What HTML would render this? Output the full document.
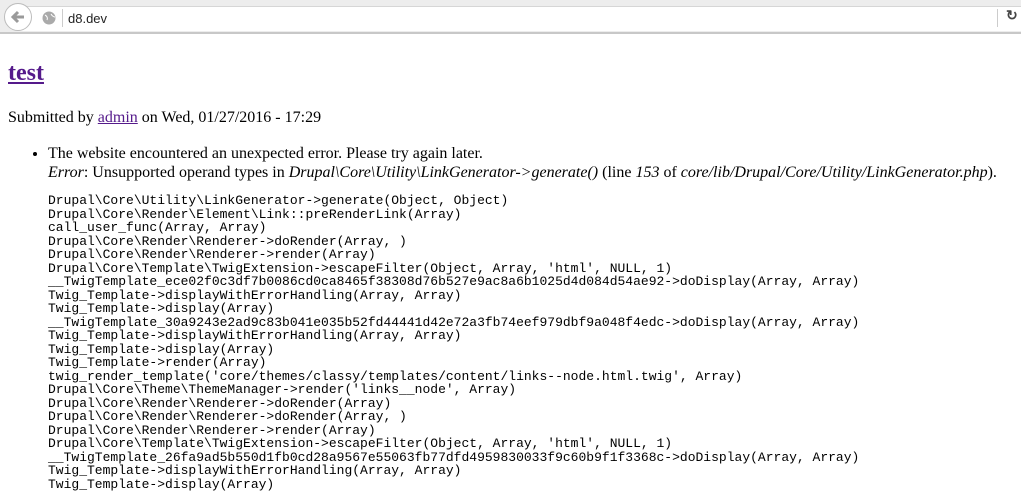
<!DOCTYPE html>
<html><head><style>
body{margin:0;width:1021px;height:491px;overflow:hidden;background:#fff;font-family:"Liberation Serif",serif;color:#000}
.bar{position:absolute;left:0;top:0;width:1021px;height:32px;background:#ededed;border-bottom:2px solid #c8c8c8}
.field{position:absolute;left:20px;top:6px;right:0;height:24px;background:#fff;border-top:1px solid #d6d6d6}
.back{position:absolute;left:4px;top:3px;width:28px;height:28px;border-radius:50%;background:#fff;border:1px solid #bcbcbc;box-sizing:border-box}
.url{position:absolute;left:68px;top:11px;font:13px "Liberation Sans",sans-serif;color:#222}
h1{position:absolute;left:8px;top:60px;margin:0;font-size:24px;font-weight:bold}
h1 a{color:#551a8b}
.sub{position:absolute;left:8px;top:109px;font-size:16px}
.sub a{color:#551a8b}
ul{position:absolute;left:8px;top:144px;margin:0;padding-left:40px;font-size:16px;line-height:19px;width:990px}
pre{margin:12px 0 0;font:13px/13.52px "Liberation Mono",monospace}
</style></head><body>
<div class="bar"><div class="field"></div>
<div class="back"><svg width="26" height="26" viewBox="0 0 26 26"><path d="M19 13H8M13 8l-5 5 5 5" stroke="#9a9a9a" stroke-width="3" fill="none"/></svg></div>
<svg style="position:absolute;left:42px;top:11px" width="14" height="14"><circle cx="7" cy="7" r="6.5" fill="#aaa"/><path d="M3 4c2 1 3 3 2 5M9 3c1 2 3 3 4 3" stroke="#fff" fill="none"/></svg>
<div style="position:absolute;left:62px;top:9px;width:1px;height:18px;background:#ccc"></div>
<div class="url">d8.dev</div>
<div style="position:absolute;left:997px;top:9px;width:1px;height:18px;background:#ccc"></div>
<div style="position:absolute;left:1006px;top:7px;font:bold 14px 'Liberation Sans',sans-serif;color:#444">↻</div>
</div>
<h1><a href="#">test</a></h1>
<div class="sub">Submitted by <a href="#">admin</a> on Wed, 01/27/2016 - 17:29</div>
<ul><li>The website encountered an unexpected error. Please try again later.<br><em>Error</em>: Unsupported operand types in <em>Drupal\Core\Utility\LinkGenerator-&gt;generate()</em> (line <em>153</em> of <em>core/lib/Drupal/Core/Utility/LinkGenerator.php</em>).
<pre>Drupal\Core\Utility\LinkGenerator-&gt;generate(Object, Object)
Drupal\Core\Render\Element\Link::preRenderLink(Array)
call_user_func(Array, Array)
Drupal\Core\Render\Renderer-&gt;doRender(Array, )
Drupal\Core\Render\Renderer-&gt;render(Array)
Drupal\Core\Template\TwigExtension-&gt;escapeFilter(Object, Array, 'html', NULL, 1)
__TwigTemplate_ece02f0c3df7b0086cd0ca8465f38308d76b527e9ac8a6b1025d4d084d54ae92-&gt;doDisplay(Array, Array)
Twig_Template-&gt;displayWithErrorHandling(Array, Array)
Twig_Template-&gt;display(Array)
__TwigTemplate_30a9243e2ad9c83b041e035b52fd44441d42e72a3fb74eef979dbf9a048f4edc-&gt;doDisplay(Array, Array)
Twig_Template-&gt;displayWithErrorHandling(Array, Array)
Twig_Template-&gt;display(Array)
Twig_Template-&gt;render(Array)
twig_render_template('core/themes/classy/templates/content/links--node.html.twig', Array)
Drupal\Core\Theme\ThemeManager-&gt;render('links__node', Array)
Drupal\Core\Render\Renderer-&gt;doRender(Array)
Drupal\Core\Render\Renderer-&gt;doRender(Array, )
Drupal\Core\Render\Renderer-&gt;render(Array)
Drupal\Core\Template\TwigExtension-&gt;escapeFilter(Object, Array, 'html', NULL, 1)
__TwigTemplate_26fa9ad5b550d1fb0cd28a9567e55063fb77dfd4959830033f9c60b9f1f3368c-&gt;doDisplay(Array, Array)
Twig_Template-&gt;displayWithErrorHandling(Array, Array)
Twig_Template-&gt;display(Array)
</pre></li></ul>
</body></html>
